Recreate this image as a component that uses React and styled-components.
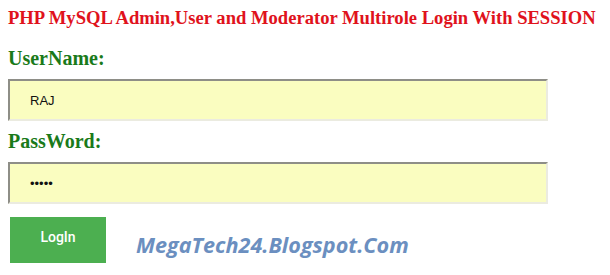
import React from "react"
import styled, { createGlobalStyle } from "styled-components"

const GlobalStyle = createGlobalStyle`
  body {
    margin: 0;
    background: #ffffff;
  }
`

const Page = styled.div`
  padding: 8px 8px 0;
  font-family: "Liberation Serif", "Times New Roman", serif;
`

const Title = styled.h1`
  margin: 0;
  font-size: 18.6px;
  line-height: 19px;
  font-weight: bold;
  color: #e0121c;
  white-space: nowrap;
`

const Label = styled.label`
  display: block;
  margin: ${(p) => p.$top}px 0 0;
  font-size: 20px;
  line-height: 23px;
  font-weight: bold;
  color: #1a7a1a;
`

const Field = styled.input`
  display: block;
  box-sizing: border-box;
  width: 540px;
  height: 42px;
  margin-top: ${(p) => p.$top}px;
  padding: 0 0 0 20px;
  background: #fafdc0;
  border-style: solid;
  border-width: 2px;
  border-color: #8e8e87 #ebebe0 #ebebe0 #8e8e87;
  font-family: "Liberation Sans", Arial, sans-serif;
  font-size: 13px;
  color: #111;
  outline: none;
`

const Actions = styled.div`
  display: flex;
  align-items: center;
  gap: 30px;
  margin-top: 13px;
  padding-left: 2px;
`

const Button = styled.button`
  width: 96px;
  height: 46px;
  border: none;
  background: #4caf50;
  color: #ffffff;
  font-family: Roboto, "Liberation Sans", sans-serif;
  font-size: 14px;
  font-weight: 500;
  padding: 0 0 6px;
`

const Brand = styled.span`
  font-family: "Open Sans", "DejaVu Sans", sans-serif;
  font-style: italic;
  font-weight: bold;
  font-size: 21.6px;
  color: #6b8fc0;
  margin-top: 8px;
`

export default function App() {
  return (
    <>
      <GlobalStyle />
      <Page>
        <Title>PHP MySQL Admin,User and Moderator Multirole Login With SESSION</Title>
        <Label $top={20}>UserName:</Label>
        <Field type="text" defaultValue="RAJ" $top={9} />
        <Label $top={9}>PassWord:</Label>
        <Field type="password" defaultValue="12345" $top={9} />
        <Actions>
          <Button>LogIn</Button>
          <Brand>MegaTech24.Blogspot.Com</Brand>
        </Actions>
      </Page>
    </>
  )
}
